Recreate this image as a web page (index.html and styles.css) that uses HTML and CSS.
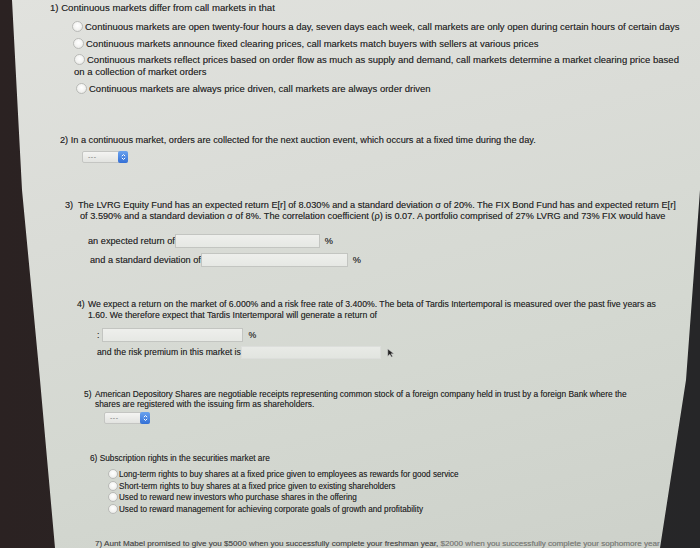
FILE: index.html
```html
<!DOCTYPE html>
<html>
<head>
<meta charset="utf-8">
<link rel="stylesheet" href="styles.css">
</head>
<body>
<div class="screen">
  <div class="page">
    <div class="q q1">
      <div class="title">1) Continuous markets differ from call markets in that</div>
      <div class="opts">
        <div class="opt o1"><span class="radio"></span>Continuous markets are open twenty-four hours a day, seven days each week, call markets are only open during certain hours of certain days</div>
        <div class="opt o2"><span class="radio"></span>Continuous markets announce fixed clearing prices, call markets match buyers with sellers at various prices</div>
        <div class="opt o3"><span class="radio"></span>Continuous markets reflect prices based on order flow as much as supply and demand, call markets determine a market clearing price based<br>on a collection of market orders</div>
        <div class="opt o4"><span class="radio"></span>Continuous markets are always price driven, call markets are always order driven</div>
      </div>
    </div>

    <div class="q q2">
      <div class="title">2) In a continuous market, orders are collected for the next auction event, which occurs at a fixed time during the day.</div>
      <div class="sel sel2"><span class="dash">---</span><span class="btn"><svg viewBox="0 0 8 12" width="7" height="10"><path d="M2 5 L4 3 L6 5 M2 7 L4 9 L6 7" fill="none" stroke="#fff" stroke-width="1.2"/></svg></span></div>
    </div>

    <div class="q q3">
      <div class="stem"><span class="num">3)</span><span class="txt">The LVRG Equity Fund has an expected return E[r] of 8.030% and a standard deviation σ of 20%. The FIX Bond Fund has and expected return E[r]<br><span class="l2">of 3.590% and a standard deviation σ of 8%. The correlation coefficient (ρ) is 0.07. A portfolio comprised of 27% LVRG and 73% FIX would have</span></span></div>
      <div class="row r1"><span>an expected return of</span><span class="inp w1"></span><span class="pct">%</span></div>
      <div class="row r2"><span>and a standard deviation of</span><span class="inp w2"></span><span class="pct">%</span></div>
    </div>

    <div class="q q4">
      <div class="stem"><span class="num">4)</span><span class="txt">We expect a return on the market of 6.000% and a risk free rate of 3.400%. The beta of Tardis Intertemporal is measured over the past five years as<br>1.60. We therefore expect that Tardis Intertemporal will generate a return of</span></div>
      <div class="row r1"><span>:</span><span class="inp w3"></span><span class="pct">%</span></div>
      <div class="row r2"><span>and the risk premium in this market is</span><span class="inp w4 faint"></span><svg class="cursor" viewBox="0 0 10 12" width="8" height="10"><path d="M1 1 L1 10 L3.5 7.5 L5.5 11 L7 10.3 L5 7 L8.5 7 Z" fill="#222" stroke="#ccc" stroke-width="0.6"/></svg></div>
    </div>

    <div class="q q5">
      <div class="stem"><span class="num">5)</span><span class="txt">American Depository Shares are negotiable receipts representing common stock of a foreign company held in trust by a foreign Bank where the<br>shares are registered with the issuing firm as shareholders.</span></div>
      <div class="sel sel5"><span class="dash">---</span><span class="btn"><svg viewBox="0 0 8 12" width="7" height="10"><path d="M2 5 L4 3 L6 5 M2 7 L4 9 L6 7" fill="none" stroke="#fff" stroke-width="1.2"/></svg></span></div>
    </div>

    <div class="q q6">
      <div class="title">6) Subscription rights in the securities market are</div>
      <div class="opts">
        <div class="opt"><span class="radio"></span>Long-term rights to buy shares at a fixed price given to employees as rewards for good service</div>
        <div class="opt"><span class="radio"></span>Short-term rights to buy shares at a fixed price given to existing shareholders</div>
        <div class="opt"><span class="radio"></span>Used to reward new investors who purchase shares in the offering</div>
        <div class="opt"><span class="radio"></span>Used to reward management for achieving corporate goals of growth and profitability</div>
      </div>
    </div>

    <div class="q q7">
      <div class="title">7) Aunt Mabel promised to give you $5000 when you successfully complete your freshman year, <span class="fade">$2000 when you successfully complete your sophomore year</span></div>
    </div>
  </div>
</div>
</body>
</html>
```

FILE: styles.css
```css
* { box-sizing: border-box; }
html, body { margin: 0; padding: 0; }
body {
  width: 700px;
  height: 548px;
  overflow: hidden;
  background: #2a2525;
  font-family: "Liberation Sans", Arial, sans-serif;
}
.screen {
  width: 700px;
  height: 548px;
  background: linear-gradient(90deg, #2b2222 0%, #2a2626 50%, #262628 100%);
}
.page {
  width: 700px;
  height: 548px;
  overflow: hidden;
  display: flex;
  flex-direction: column;
  padding-top: 2px;
  color: #2e2e2e;
  text-shadow: 0 0 0.4px rgba(40, 40, 40, 0.6);
  background: linear-gradient(165deg, #e1e2de 0%, #dadcd7 35%, #d4d8d1 65%, #cdd1ca 100%);
  clip-path: polygon(12px 0, 700px 0, 700px 190px, 686px 380px, 660px 548px, 55px 548px, 40px 380px, 22px 190px);
}
.q { white-space: nowrap; }
.title { line-height: 12px; }

/* Q1 */
.q1 { padding-left: 50px; font-size: 9.6px; }
.q1 .opts { padding-left: 22px; font-size: 9.5px; }
.q1 .opt { line-height: 12px; margin-top: 5px; }
.q1 .o1 { margin-top: 7px; }
.q1 .o3 { margin-top: 4px; }
.q1 .o4 { padding-left: 4px; }
.q1 .o2 { padding-left: 1px; }
.q1 .o3 { padding-left: 2px; }
.radio {
  display: inline-block;
  width: 11px;
  height: 11px;
  border-radius: 50%;
  border: 1px solid #b9bab7;
  background: radial-gradient(circle at 50% 40%, #ffffff 0%, #f3f3f1 55%, #dcddda 100%);
  vertical-align: -2px;
  margin-right: 2px;
}

/* Q2 */
.q2 { margin-top: 39px; padding-left: 60px; font-size: 9.2px; }
.q2 .title { line-height: 12px; }
.sel {
  display: flex;
  align-items: center;
  justify-content: space-between;
  width: 46px;
  height: 12px;
  margin-top: 5px;
  border: 1px solid #c4c5c2;
  border-radius: 2px;
  background: linear-gradient(#f4f4f2, #e2e3e0);
  padding-left: 5px;
  text-shadow: none;
}
.sel2 { margin-left: 22px; }
.dash { font-size: 7px; color: #777; letter-spacing: 0.5px; line-height: 8px; }
.btn {
  width: 10px;
  height: 12px;
  margin-right: -1px;
  border-radius: 2px;
  background: linear-gradient(#6aa2ee, #3470d6);
  display: flex;
  align-items: center;
  justify-content: center;
}

/* Q3 */
.stem { display: flex; }
.num { flex: none; }
.q3 { margin-top: 37px; padding-left: 65px; font-size: 9.2px; line-height: 11px; }
.q3 .num { width: 13px; }
.q3 .l2 { padding-left: 2px; }
.row { display: flex; align-items: center; }
.inp {
  display: block;
  height: 14px;
  border: 1px solid #c3c5c1;
  background: linear-gradient(#eeefec, #e6e8e4);
}
.pct { margin-left: 5px; }
.q3 .r1 { margin-top: 12px; padding-left: 23px; }
.q3 .r2 { margin-top: 5px; padding-left: 25px; }
.w1 { width: 145px; }
.w2 { width: 147px; }

/* Q4 */
.q4 { margin-top: 32px; padding-left: 77px; font-size: 8.7px; line-height: 11px; }
.q4 .num { width: 11px; }
.q4 .r1 { margin-top: 7px; padding-left: 20px; }
.q4 .r1 .inp { margin-left: 3px; }
.q4 .r2 { margin-top: 4px; padding-left: 20px; }
.w3 { width: 141px; }
.w4 { width: 140px; height: 13px; }
.faint {
  border-color: #dcdedb;
  background: linear-gradient(#e8eae6, #e2e5e0);
}
.cursor { margin-left: 6px; }

/* Q5 */
.q5 { margin-top: 30px; padding-left: 84px; font-size: 8.4px; line-height: 10px; }
.q5 .num { width: 11px; }
.sel5 { margin-left: 20px; margin-top: 3px; }

/* Q6 */
.q6 { margin-top: 29px; padding-left: 90px; font-size: 8.3px; }
.q6 .title { line-height: 10px; }
.q6 .opts { padding-left: 18px; margin-top: 6px; font-size: 8.15px; }
.q6 .opt { line-height: 11.7px; }
.q6 .radio { width: 10px; height: 10px; margin-right: 1px; }

/* Q7 */
.q7 { margin-top: 23px; padding-left: 95px; font-size: 8.1px; color: #555; }
.q7 .title { line-height: 10px; }
.fade { color: #8a8c88; }
```
